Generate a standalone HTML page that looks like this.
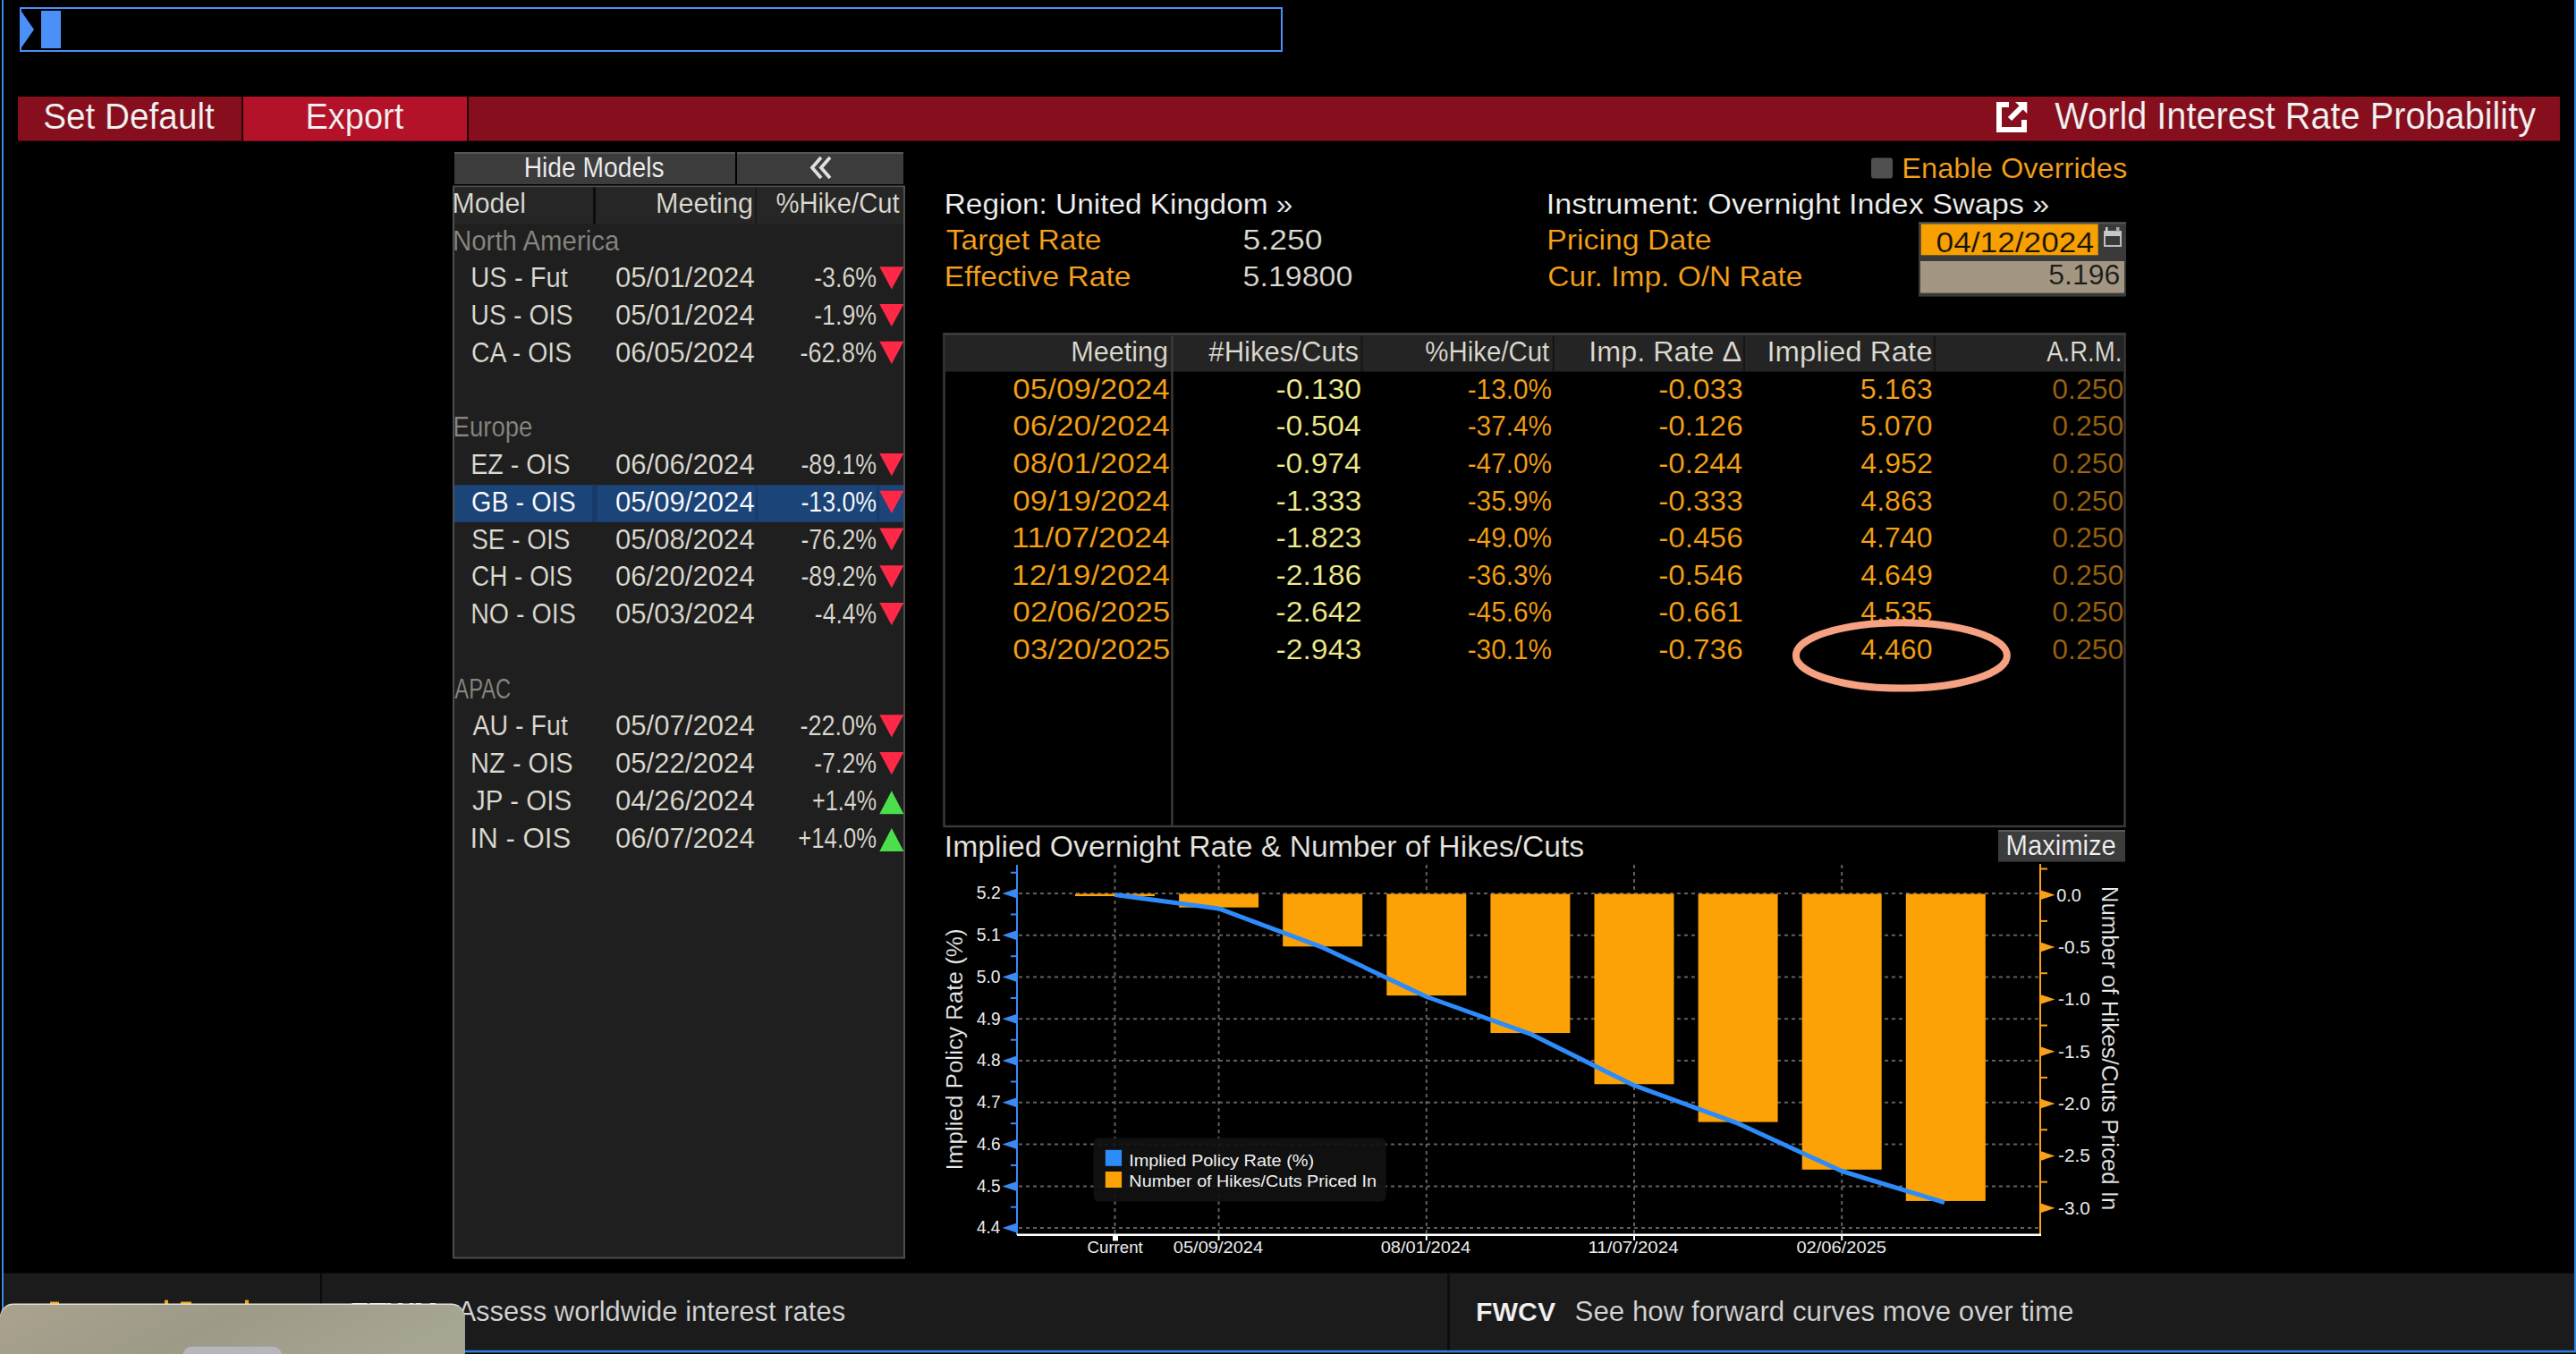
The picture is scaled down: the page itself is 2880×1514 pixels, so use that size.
<!DOCTYPE html>
<html><head><meta charset="utf-8"><style>
html,body{margin:0;padding:0;background:#000;overflow:hidden;width:2880px;height:1514px}
svg{display:block}
text{font-family:"Liberation Sans",sans-serif}
</style></head><body>
<svg width="2880" height="1514" viewBox="0 0 2880 1514">
<rect width="2880" height="1514" fill="#000"/>
<rect x="2.00" y="0.00" width="2.00" height="1512.00" fill="#3a86e6"/>
<rect x="2878.00" y="0.00" width="2.00" height="1512.00" fill="#2f86e0"/>
<rect x="2.00" y="1509.50" width="2878.00" height="3.00" fill="#2f7fd8"/>
<rect x="23" y="9" width="1410" height="48" fill="none" stroke="#4a90f8" stroke-width="2"/>
<polygon points="22,10 38,33 22,56" fill="#4a90f8"/>
<rect x="46.00" y="12.00" width="22.00" height="42.00" fill="#4a90f8"/>
<rect x="20.00" y="108.00" width="2842.00" height="49.50" fill="#870e1d"/>
<rect x="270.00" y="108.00" width="2.00" height="49.50" fill="#1a0003"/>
<rect x="272.00" y="108.00" width="250.00" height="49.50" fill="#b31228"/>
<rect x="522.00" y="108.00" width="2.00" height="49.50" fill="#1a0003"/>
<text x="48.24" y="143.60" font-size="41" fill="#f2f2f2" textLength="191.54" lengthAdjust="spacingAndGlyphs" stroke="#870e1d" stroke-width="0.2">Set Default</text>
<text x="341.38" y="143.60" font-size="41" fill="#f2f2f2" textLength="109.90" lengthAdjust="spacingAndGlyphs" stroke="#b31228" stroke-width="0.2">Export</text>
<path d="M2232,114 H2246 V120 H2238 V142 H2260 V134 H2266 V148 H2232 Z" fill="#fff"/>
<polygon points="2253,114 2266.3,114 2266.3,127" fill="#fff"/>
<line x1="2247" y1="133" x2="2262" y2="118" stroke="#fff" stroke-width="6"/>
<text x="2297.33" y="144.00" font-size="42" fill="#f2f2f2" textLength="537.75" lengthAdjust="spacingAndGlyphs" stroke="#870e1d" stroke-width="0.2">World Interest Rate Probability</text>
<rect x="508.00" y="170.00" width="314.00" height="36.00" fill="#3c3c3c"/>
<rect x="508.00" y="170.00" width="314.00" height="2.00" fill="#555"/>
<rect x="824.00" y="170.00" width="186.00" height="36.00" fill="#3c3c3c"/>
<rect x="824.00" y="170.00" width="186.00" height="2.00" fill="#555"/>
<text x="585.69" y="197.70" font-size="32" fill="#f2f2f2" textLength="156.83" lengthAdjust="spacingAndGlyphs" stroke="#3c3c3c" stroke-width="0.2">Hide Models</text>
<path d="M918,176 L908,187.5 L918,199 M928,176 L918,187.5 L928,199" fill="none" stroke="#e0e0e0" stroke-width="3.8"/>
<rect x="507" y="208.5" width="504" height="1198" fill="#1f1f1f" stroke="#4e4e4e" stroke-width="2"/>
<rect x="508.00" y="209.50" width="502.00" height="41.00" fill="#262626"/>
<rect x="663.00" y="209.50" width="3.00" height="41.00" fill="#0c0c0c"/>
<rect x="844.00" y="209.50" width="2.00" height="41.00" fill="#1a1a1a"/>
<text x="505.51" y="237.60" font-size="32" fill="#dedbd2" textLength="82.51" lengthAdjust="spacingAndGlyphs" stroke="#262626" stroke-width="0.2">Model</text>
<text x="732.99" y="237.60" font-size="32" fill="#dedbd2" textLength="108.99" lengthAdjust="spacingAndGlyphs" stroke="#262626" stroke-width="0.2">Meeting</text>
<text x="867.46" y="237.60" font-size="32" fill="#dedbd2" textLength="138.26" lengthAdjust="spacingAndGlyphs" stroke="#262626" stroke-width="0.2">%Hike/Cut</text>
<text x="506.01" y="279.50" font-size="32" fill="#8a8780" textLength="186.29" lengthAdjust="spacingAndGlyphs" stroke="#1f1f1f" stroke-width="0.2">North America</text>
<text x="526.25" y="321.25" font-size="32" fill="#dedbd2" textLength="108.67" lengthAdjust="spacingAndGlyphs" stroke="#1f1f1f" stroke-width="0.2">US - Fut</text>
<text x="687.98" y="321.25" font-size="32" fill="#dedbd2" textLength="155.73" lengthAdjust="spacingAndGlyphs" stroke="#1f1f1f" stroke-width="0.2">05/01/2024</text>
<text x="910.21" y="321.25" font-size="32" fill="#dedbd2" textLength="69.94" lengthAdjust="spacingAndGlyphs" stroke="#1f1f1f" stroke-width="0.2">-3.6%</text>
<polygon points="983.3,298.2 1010.4,298.2 996.85,323.6" fill="#ff2847"/>
<text x="526.30" y="363.00" font-size="32" fill="#dedbd2" textLength="114.32" lengthAdjust="spacingAndGlyphs" stroke="#1f1f1f" stroke-width="0.2">US - OIS</text>
<text x="687.98" y="363.00" font-size="32" fill="#dedbd2" textLength="155.73" lengthAdjust="spacingAndGlyphs" stroke="#1f1f1f" stroke-width="0.2">05/01/2024</text>
<text x="910.21" y="363.00" font-size="32" fill="#dedbd2" textLength="69.94" lengthAdjust="spacingAndGlyphs" stroke="#1f1f1f" stroke-width="0.2">-1.9%</text>
<polygon points="983.3,340.0 1010.4,340.0 996.85,365.3" fill="#ff2847"/>
<text x="527.08" y="404.75" font-size="32" fill="#dedbd2" textLength="112.01" lengthAdjust="spacingAndGlyphs" stroke="#1f1f1f" stroke-width="0.2">CA - OIS</text>
<text x="687.98" y="404.75" font-size="32" fill="#dedbd2" textLength="155.73" lengthAdjust="spacingAndGlyphs" stroke="#1f1f1f" stroke-width="0.2">06/05/2024</text>
<text x="894.40" y="404.75" font-size="32" fill="#dedbd2" textLength="85.77" lengthAdjust="spacingAndGlyphs" stroke="#1f1f1f" stroke-width="0.2">-62.8%</text>
<polygon points="983.3,381.8 1010.4,381.8 996.85,407.1" fill="#ff2847"/>
<text x="506.54" y="488.25" font-size="32" fill="#8a8780" textLength="88.78" lengthAdjust="spacingAndGlyphs" stroke="#1f1f1f" stroke-width="0.2">Europe</text>
<text x="526.15" y="530.00" font-size="32" fill="#dedbd2" textLength="111.36" lengthAdjust="spacingAndGlyphs" stroke="#1f1f1f" stroke-width="0.2">EZ - OIS</text>
<text x="687.98" y="530.00" font-size="32" fill="#dedbd2" textLength="155.73" lengthAdjust="spacingAndGlyphs" stroke="#1f1f1f" stroke-width="0.2">06/06/2024</text>
<text x="895.41" y="530.00" font-size="32" fill="#dedbd2" textLength="84.74" lengthAdjust="spacingAndGlyphs" stroke="#1f1f1f" stroke-width="0.2">-89.1%</text>
<polygon points="983.3,507.0 1010.4,507.0 996.85,532.3" fill="#ff2847"/>
<rect x="508.00" y="542.25" width="502.00" height="41.50" fill="#1b4478"/>
<rect x="662.00" y="542.25" width="6.00" height="41.50" fill="#183a68"/>
<rect x="845.00" y="542.25" width="2.00" height="41.50" fill="#183a68"/>
<rect x="980.00" y="542.25" width="3.00" height="41.50" fill="#183a68"/>
<text x="527.05" y="571.75" font-size="32" fill="#ffffff" textLength="116.67" lengthAdjust="spacingAndGlyphs" stroke="#1b4478" stroke-width="0.2">GB - OIS</text>
<text x="687.98" y="571.75" font-size="32" fill="#ffffff" textLength="155.73" lengthAdjust="spacingAndGlyphs" stroke="#1b4478" stroke-width="0.2">05/09/2024</text>
<text x="895.41" y="571.75" font-size="32" fill="#ffffff" textLength="84.74" lengthAdjust="spacingAndGlyphs" stroke="#1b4478" stroke-width="0.2">-13.0%</text>
<polygon points="983.3,548.8 1010.4,548.8 996.85,574.0" fill="#ff2847"/>
<text x="527.23" y="613.50" font-size="32" fill="#dedbd2" textLength="110.25" lengthAdjust="spacingAndGlyphs" stroke="#1f1f1f" stroke-width="0.2">SE - OIS</text>
<text x="687.98" y="613.50" font-size="32" fill="#dedbd2" textLength="155.73" lengthAdjust="spacingAndGlyphs" stroke="#1f1f1f" stroke-width="0.2">05/08/2024</text>
<text x="895.41" y="613.50" font-size="32" fill="#dedbd2" textLength="84.74" lengthAdjust="spacingAndGlyphs" stroke="#1f1f1f" stroke-width="0.2">-76.2%</text>
<polygon points="983.3,590.5 1010.4,590.5 996.85,615.8" fill="#ff2847"/>
<text x="527.08" y="655.25" font-size="32" fill="#dedbd2" textLength="113.10" lengthAdjust="spacingAndGlyphs" stroke="#1f1f1f" stroke-width="0.2">CH - OIS</text>
<text x="687.98" y="655.25" font-size="32" fill="#dedbd2" textLength="155.73" lengthAdjust="spacingAndGlyphs" stroke="#1f1f1f" stroke-width="0.2">06/20/2024</text>
<text x="895.41" y="655.25" font-size="32" fill="#dedbd2" textLength="84.74" lengthAdjust="spacingAndGlyphs" stroke="#1f1f1f" stroke-width="0.2">-89.2%</text>
<polygon points="983.3,632.2 1010.4,632.2 996.85,657.5" fill="#ff2847"/>
<text x="526.15" y="697.00" font-size="32" fill="#dedbd2" textLength="117.56" lengthAdjust="spacingAndGlyphs" stroke="#1f1f1f" stroke-width="0.2">NO - OIS</text>
<text x="687.98" y="697.00" font-size="32" fill="#dedbd2" textLength="155.73" lengthAdjust="spacingAndGlyphs" stroke="#1f1f1f" stroke-width="0.2">05/03/2024</text>
<text x="910.82" y="697.00" font-size="32" fill="#dedbd2" textLength="69.33" lengthAdjust="spacingAndGlyphs" stroke="#1f1f1f" stroke-width="0.2">-4.4%</text>
<polygon points="983.3,674.0 1010.4,674.0 996.85,699.3" fill="#ff2847"/>
<text x="508.35" y="780.50" font-size="32" fill="#8a8780" textLength="62.82" lengthAdjust="spacingAndGlyphs" stroke="#1f1f1f" stroke-width="0.2">APAC</text>
<text x="528.44" y="822.25" font-size="32" fill="#dedbd2" textLength="106.47" lengthAdjust="spacingAndGlyphs" stroke="#1f1f1f" stroke-width="0.2">AU - Fut</text>
<text x="687.98" y="822.25" font-size="32" fill="#dedbd2" textLength="155.73" lengthAdjust="spacingAndGlyphs" stroke="#1f1f1f" stroke-width="0.2">05/07/2024</text>
<text x="894.40" y="822.25" font-size="32" fill="#dedbd2" textLength="85.77" lengthAdjust="spacingAndGlyphs" stroke="#1f1f1f" stroke-width="0.2">-22.0%</text>
<polygon points="983.3,799.2 1010.4,799.2 996.85,824.5" fill="#ff2847"/>
<text x="526.12" y="864.00" font-size="32" fill="#dedbd2" textLength="114.51" lengthAdjust="spacingAndGlyphs" stroke="#1f1f1f" stroke-width="0.2">NZ - OIS</text>
<text x="687.98" y="864.00" font-size="32" fill="#dedbd2" textLength="155.73" lengthAdjust="spacingAndGlyphs" stroke="#1f1f1f" stroke-width="0.2">05/22/2024</text>
<text x="910.21" y="864.00" font-size="32" fill="#dedbd2" textLength="69.94" lengthAdjust="spacingAndGlyphs" stroke="#1f1f1f" stroke-width="0.2">-7.2%</text>
<polygon points="983.3,841.0 1010.4,841.0 996.85,866.3" fill="#ff2847"/>
<text x="528.04" y="905.75" font-size="32" fill="#dedbd2" textLength="111.11" lengthAdjust="spacingAndGlyphs" stroke="#1f1f1f" stroke-width="0.2">JP - OIS</text>
<text x="687.98" y="905.75" font-size="32" fill="#dedbd2" textLength="155.73" lengthAdjust="spacingAndGlyphs" stroke="#1f1f1f" stroke-width="0.2">04/26/2024</text>
<text x="908.07" y="905.75" font-size="32" fill="#dedbd2" textLength="72.02" lengthAdjust="spacingAndGlyphs" stroke="#1f1f1f" stroke-width="0.2">+1.4%</text>
<polygon points="983.3,910.2 1010.4,910.2 996.85,884.2" fill="#4be04b"/>
<text x="525.62" y="947.50" font-size="32" fill="#dedbd2" textLength="112.61" lengthAdjust="spacingAndGlyphs" stroke="#1f1f1f" stroke-width="0.2">IN - OIS</text>
<text x="687.98" y="947.50" font-size="32" fill="#dedbd2" textLength="155.73" lengthAdjust="spacingAndGlyphs" stroke="#1f1f1f" stroke-width="0.2">06/07/2024</text>
<text x="892.35" y="947.50" font-size="32" fill="#dedbd2" textLength="87.77" lengthAdjust="spacingAndGlyphs" stroke="#1f1f1f" stroke-width="0.2">+14.0%</text>
<polygon points="983.3,952.0 1010.4,952.0 996.85,926.0" fill="#4be04b"/>
<rect x="2092" y="176.5" width="24" height="23" rx="3" fill="#505050"/>
<text x="2126.33" y="199.00" font-size="32" fill="#f7a21b" textLength="251.85" lengthAdjust="spacingAndGlyphs" stroke="#000" stroke-width="0.2">Enable Overrides</text>
<text x="1055.76" y="238.70" font-size="32" fill="#f2f2f2" textLength="389.59" lengthAdjust="spacingAndGlyphs" stroke="#000" stroke-width="0.2">Region: United Kingdom »</text>
<text x="1728.84" y="238.70" font-size="32" fill="#f2f2f2" textLength="562.54" lengthAdjust="spacingAndGlyphs" stroke="#000" stroke-width="0.2">Instrument: Overnight Index Swaps »</text>
<text x="1057.76" y="279.30" font-size="32" fill="#f7a21b" textLength="173.70" lengthAdjust="spacingAndGlyphs" stroke="#000" stroke-width="0.2">Target Rate</text>
<text x="1389.58" y="279.30" font-size="32" fill="#dedbd2" textLength="88.81" lengthAdjust="spacingAndGlyphs" stroke="#000" stroke-width="0.2">5.250</text>
<text x="1055.75" y="320.20" font-size="32" fill="#f7a21b" textLength="208.74" lengthAdjust="spacingAndGlyphs" stroke="#000" stroke-width="0.2">Effective Rate</text>
<text x="1389.64" y="320.20" font-size="32" fill="#dedbd2" textLength="122.68" lengthAdjust="spacingAndGlyphs" stroke="#000" stroke-width="0.2">5.19800</text>
<text x="1729.22" y="279.30" font-size="32" fill="#f7a21b" textLength="184.28" lengthAdjust="spacingAndGlyphs" stroke="#000" stroke-width="0.2">Pricing Date</text>
<text x="1730.31" y="320.20" font-size="32" fill="#f7a21b" textLength="285.17" lengthAdjust="spacingAndGlyphs" stroke="#000" stroke-width="0.2">Cur. Imp. O/N Rate</text>
<rect x="2145.00" y="248.40" width="232.00" height="83.20" fill="#3a3a3a"/>
<rect x="2147.70" y="250.30" width="198.00" height="35.00" fill="#f7a000"/>
<text x="2164.62" y="282.00" font-size="32" fill="#111" textLength="176.41" lengthAdjust="spacingAndGlyphs" stroke="#f7a000" stroke-width="0.2">04/12/2024</text>
<rect x="2145.00" y="248.40" width="232.00" height="2.00" fill="#555"/>
<rect x="2353" y="259" width="18" height="16" fill="none" stroke="#bdbdbd" stroke-width="2"/>
<rect x="2353.00" y="259.00" width="18.00" height="5.00" fill="#c8c8c8"/>
<rect x="2354.00" y="254.00" width="2.50" height="5.00" fill="#d0d0d0"/>
<rect x="2366.00" y="254.00" width="3.50" height="5.00" fill="#a8a8a8"/>
<rect x="2147.00" y="292.00" width="228.00" height="35.60" fill="#a39682"/>
<text x="2290.22" y="318.40" font-size="32" fill="#1a1a1a" textLength="80.19" lengthAdjust="spacingAndGlyphs" stroke="#a39682" stroke-width="0.2">5.196</text>
<rect x="1055.5" y="373.5" width="1320" height="550.5" fill="#000" stroke="#3a3a3a" stroke-width="2.5"/>
<rect x="1054.50" y="372.00" width="1322.00" height="3.50" fill="#3a3a3a"/>
<rect x="1056.50" y="375.50" width="1318.00" height="40.00" fill="#242424"/>
<rect x="1521.60" y="375.50" width="2.00" height="40.00" fill="#141414"/>
<rect x="1735.70" y="375.50" width="2.00" height="40.00" fill="#141414"/>
<rect x="1949.00" y="375.50" width="2.00" height="40.00" fill="#141414"/>
<rect x="2161.80" y="375.50" width="2.00" height="40.00" fill="#141414"/>
<rect x="1309.20" y="375.50" width="2.50" height="548.00" fill="#3a3a3a"/>
<text x="1197.19" y="403.60" font-size="32" fill="#dedbd2" textLength="108.78" lengthAdjust="spacingAndGlyphs" stroke="#252525" stroke-width="0.2">Meeting</text>
<text x="1351.36" y="403.60" font-size="32" fill="#dedbd2" textLength="167.56" lengthAdjust="spacingAndGlyphs" stroke="#252525" stroke-width="0.2">#Hikes/Cuts</text>
<text x="1593.35" y="403.60" font-size="32" fill="#dedbd2" textLength="138.86" lengthAdjust="spacingAndGlyphs" stroke="#252525" stroke-width="0.2">%Hike/Cut</text>
<text x="1776.32" y="403.60" font-size="32" fill="#dedbd2" textLength="170.66" lengthAdjust="spacingAndGlyphs" stroke="#252525" stroke-width="0.2">Imp. Rate Δ</text>
<text x="1975.46" y="403.60" font-size="32" fill="#dedbd2" textLength="185.01" lengthAdjust="spacingAndGlyphs" stroke="#252525" stroke-width="0.2">Implied Rate</text>
<text x="2288.25" y="403.60" font-size="32" fill="#dedbd2" textLength="84.07" lengthAdjust="spacingAndGlyphs" stroke="#252525" stroke-width="0.2">A.R.M.</text>
<text x="1132.33" y="445.80" font-size="32" fill="#f8a214" textLength="175.50" lengthAdjust="spacingAndGlyphs" stroke="#000" stroke-width="0.2">05/09/2024</text>
<text x="1426.40" y="445.80" font-size="32" fill="#f2ec8c" textLength="95.72" lengthAdjust="spacingAndGlyphs" stroke="#000" stroke-width="0.2">-0.130</text>
<text x="1640.68" y="445.80" font-size="32" fill="#f8a214" textLength="94.39" lengthAdjust="spacingAndGlyphs" stroke="#000" stroke-width="0.2">-13.0%</text>
<text x="1854.22" y="445.80" font-size="32" fill="#f8a214" textLength="94.44" lengthAdjust="spacingAndGlyphs" stroke="#000" stroke-width="0.2">-0.033</text>
<text x="2079.70" y="445.80" font-size="32" fill="#f8a214" textLength="81.02" lengthAdjust="spacingAndGlyphs" stroke="#000" stroke-width="0.2">5.163</text>
<text x="2294.25" y="445.80" font-size="32" fill="#9c6410" textLength="80.00" lengthAdjust="spacingAndGlyphs" stroke="#000" stroke-width="0.2">0.250</text>
<text x="1132.33" y="487.40" font-size="32" fill="#f8a214" textLength="175.50" lengthAdjust="spacingAndGlyphs" stroke="#000" stroke-width="0.2">06/20/2024</text>
<text x="1426.41" y="487.40" font-size="32" fill="#f2ec8c" textLength="95.38" lengthAdjust="spacingAndGlyphs" stroke="#000" stroke-width="0.2">-0.504</text>
<text x="1640.68" y="487.40" font-size="32" fill="#f8a214" textLength="94.39" lengthAdjust="spacingAndGlyphs" stroke="#000" stroke-width="0.2">-37.4%</text>
<text x="1854.22" y="487.40" font-size="32" fill="#f8a214" textLength="94.44" lengthAdjust="spacingAndGlyphs" stroke="#000" stroke-width="0.2">-0.126</text>
<text x="2079.71" y="487.40" font-size="32" fill="#f8a214" textLength="80.86" lengthAdjust="spacingAndGlyphs" stroke="#000" stroke-width="0.2">5.070</text>
<text x="2294.25" y="487.40" font-size="32" fill="#9c6410" textLength="80.00" lengthAdjust="spacingAndGlyphs" stroke="#000" stroke-width="0.2">0.250</text>
<text x="1132.33" y="529.00" font-size="32" fill="#f8a214" textLength="175.50" lengthAdjust="spacingAndGlyphs" stroke="#000" stroke-width="0.2">08/01/2024</text>
<text x="1426.41" y="529.00" font-size="32" fill="#f2ec8c" textLength="95.38" lengthAdjust="spacingAndGlyphs" stroke="#000" stroke-width="0.2">-0.974</text>
<text x="1640.68" y="529.00" font-size="32" fill="#f8a214" textLength="94.39" lengthAdjust="spacingAndGlyphs" stroke="#000" stroke-width="0.2">-47.0%</text>
<text x="1854.23" y="529.00" font-size="32" fill="#f8a214" textLength="93.94" lengthAdjust="spacingAndGlyphs" stroke="#000" stroke-width="0.2">-0.244</text>
<text x="2080.26" y="529.00" font-size="32" fill="#f8a214" textLength="80.66" lengthAdjust="spacingAndGlyphs" stroke="#000" stroke-width="0.2">4.952</text>
<text x="2294.25" y="529.00" font-size="32" fill="#9c6410" textLength="80.00" lengthAdjust="spacingAndGlyphs" stroke="#000" stroke-width="0.2">0.250</text>
<text x="1132.33" y="570.60" font-size="32" fill="#f8a214" textLength="175.50" lengthAdjust="spacingAndGlyphs" stroke="#000" stroke-width="0.2">09/19/2024</text>
<text x="1426.40" y="570.60" font-size="32" fill="#f2ec8c" textLength="95.89" lengthAdjust="spacingAndGlyphs" stroke="#000" stroke-width="0.2">-1.333</text>
<text x="1640.68" y="570.60" font-size="32" fill="#f8a214" textLength="94.39" lengthAdjust="spacingAndGlyphs" stroke="#000" stroke-width="0.2">-35.9%</text>
<text x="1854.22" y="570.60" font-size="32" fill="#f8a214" textLength="94.44" lengthAdjust="spacingAndGlyphs" stroke="#000" stroke-width="0.2">-0.333</text>
<text x="2080.26" y="570.60" font-size="32" fill="#f8a214" textLength="80.45" lengthAdjust="spacingAndGlyphs" stroke="#000" stroke-width="0.2">4.863</text>
<text x="2294.25" y="570.60" font-size="32" fill="#9c6410" textLength="80.00" lengthAdjust="spacingAndGlyphs" stroke="#000" stroke-width="0.2">0.250</text>
<text x="1131.01" y="612.20" font-size="32" fill="#f8a214" textLength="176.83" lengthAdjust="spacingAndGlyphs" stroke="#000" stroke-width="0.2">11/07/2024</text>
<text x="1426.40" y="612.20" font-size="32" fill="#f2ec8c" textLength="95.89" lengthAdjust="spacingAndGlyphs" stroke="#000" stroke-width="0.2">-1.823</text>
<text x="1640.68" y="612.20" font-size="32" fill="#f8a214" textLength="94.39" lengthAdjust="spacingAndGlyphs" stroke="#000" stroke-width="0.2">-49.0%</text>
<text x="1854.22" y="612.20" font-size="32" fill="#f8a214" textLength="94.44" lengthAdjust="spacingAndGlyphs" stroke="#000" stroke-width="0.2">-0.456</text>
<text x="2080.26" y="612.20" font-size="32" fill="#f8a214" textLength="80.29" lengthAdjust="spacingAndGlyphs" stroke="#000" stroke-width="0.2">4.740</text>
<text x="2294.25" y="612.20" font-size="32" fill="#9c6410" textLength="80.00" lengthAdjust="spacingAndGlyphs" stroke="#000" stroke-width="0.2">0.250</text>
<text x="1131.01" y="653.80" font-size="32" fill="#f8a214" textLength="176.83" lengthAdjust="spacingAndGlyphs" stroke="#000" stroke-width="0.2">12/19/2024</text>
<text x="1426.40" y="653.80" font-size="32" fill="#f2ec8c" textLength="95.89" lengthAdjust="spacingAndGlyphs" stroke="#000" stroke-width="0.2">-2.186</text>
<text x="1640.68" y="653.80" font-size="32" fill="#f8a214" textLength="94.39" lengthAdjust="spacingAndGlyphs" stroke="#000" stroke-width="0.2">-36.3%</text>
<text x="1854.22" y="653.80" font-size="32" fill="#f8a214" textLength="94.44" lengthAdjust="spacingAndGlyphs" stroke="#000" stroke-width="0.2">-0.546</text>
<text x="2080.26" y="653.80" font-size="32" fill="#f8a214" textLength="80.56" lengthAdjust="spacingAndGlyphs" stroke="#000" stroke-width="0.2">4.649</text>
<text x="2294.25" y="653.80" font-size="32" fill="#9c6410" textLength="80.00" lengthAdjust="spacingAndGlyphs" stroke="#000" stroke-width="0.2">0.250</text>
<text x="1132.33" y="695.40" font-size="32" fill="#f8a214" textLength="175.95" lengthAdjust="spacingAndGlyphs" stroke="#000" stroke-width="0.2">02/06/2025</text>
<text x="1426.39" y="695.40" font-size="32" fill="#f2ec8c" textLength="96.11" lengthAdjust="spacingAndGlyphs" stroke="#000" stroke-width="0.2">-2.642</text>
<text x="1640.68" y="695.40" font-size="32" fill="#f8a214" textLength="94.39" lengthAdjust="spacingAndGlyphs" stroke="#000" stroke-width="0.2">-45.6%</text>
<text x="1854.22" y="695.40" font-size="32" fill="#f8a214" textLength="94.61" lengthAdjust="spacingAndGlyphs" stroke="#000" stroke-width="0.2">-0.661</text>
<text x="2080.26" y="695.40" font-size="32" fill="#f8a214" textLength="80.39" lengthAdjust="spacingAndGlyphs" stroke="#000" stroke-width="0.2">4.535</text>
<text x="2294.25" y="695.40" font-size="32" fill="#9c6410" textLength="80.00" lengthAdjust="spacingAndGlyphs" stroke="#000" stroke-width="0.2">0.250</text>
<text x="1132.33" y="737.00" font-size="32" fill="#f8a214" textLength="175.95" lengthAdjust="spacingAndGlyphs" stroke="#000" stroke-width="0.2">03/20/2025</text>
<text x="1426.40" y="737.00" font-size="32" fill="#f2ec8c" textLength="95.89" lengthAdjust="spacingAndGlyphs" stroke="#000" stroke-width="0.2">-2.943</text>
<text x="1640.68" y="737.00" font-size="32" fill="#f8a214" textLength="94.39" lengthAdjust="spacingAndGlyphs" stroke="#000" stroke-width="0.2">-30.1%</text>
<text x="1854.22" y="737.00" font-size="32" fill="#f8a214" textLength="94.44" lengthAdjust="spacingAndGlyphs" stroke="#000" stroke-width="0.2">-0.736</text>
<text x="2080.26" y="737.00" font-size="32" fill="#f8a214" textLength="80.29" lengthAdjust="spacingAndGlyphs" stroke="#000" stroke-width="0.2">4.460</text>
<text x="2294.25" y="737.00" font-size="32" fill="#9c6410" textLength="80.00" lengthAdjust="spacingAndGlyphs" stroke="#000" stroke-width="0.2">0.250</text>
<ellipse cx="2125.9" cy="732.9" rx="118" ry="36.7" fill="none" stroke="#f5a182" stroke-width="8"/>
<text x="1055.89" y="957.60" font-size="33" fill="#e8e6e0" textLength="715.33" lengthAdjust="spacingAndGlyphs" stroke="#000" stroke-width="0.2">Implied Overnight Rate &amp; Number of Hikes/Cuts</text>
<rect x="2234.00" y="928.00" width="142.00" height="35.60" fill="#3c3c3c"/>
<rect x="2234.00" y="928.00" width="142.00" height="2.00" fill="#5a5a5a"/>
<text x="2242.61" y="955.80" font-size="32" fill="#f2f2f2" textLength="123.19" lengthAdjust="spacingAndGlyphs" stroke="#3c3c3c" stroke-width="0.2">Maximize</text>
<line x1="1139" y1="999.1" x2="2280" y2="999.1" stroke="#606060" stroke-width="2" stroke-dasharray="4 4"/>
<line x1="1139" y1="1045.8" x2="2280" y2="1045.8" stroke="#606060" stroke-width="2" stroke-dasharray="4 4"/>
<line x1="1139" y1="1092.6" x2="2280" y2="1092.6" stroke="#606060" stroke-width="2" stroke-dasharray="4 4"/>
<line x1="1139" y1="1139.3" x2="2280" y2="1139.3" stroke="#606060" stroke-width="2" stroke-dasharray="4 4"/>
<line x1="1139" y1="1186.1" x2="2280" y2="1186.1" stroke="#606060" stroke-width="2" stroke-dasharray="4 4"/>
<line x1="1139" y1="1232.8" x2="2280" y2="1232.8" stroke="#606060" stroke-width="2" stroke-dasharray="4 4"/>
<line x1="1139" y1="1279.6" x2="2280" y2="1279.6" stroke="#606060" stroke-width="2" stroke-dasharray="4 4"/>
<line x1="1139" y1="1326.4" x2="2280" y2="1326.4" stroke="#606060" stroke-width="2" stroke-dasharray="4 4"/>
<line x1="1139" y1="1373.1" x2="2280" y2="1373.1" stroke="#606060" stroke-width="2" stroke-dasharray="4 4"/>
<line x1="1246.5" y1="967" x2="1246.5" y2="1379" stroke="#606060" stroke-width="2" stroke-dasharray="4 4"/>
<line x1="1362.6" y1="967" x2="1362.6" y2="1379" stroke="#606060" stroke-width="2" stroke-dasharray="4 4"/>
<line x1="1594.8" y1="967" x2="1594.8" y2="1379" stroke="#606060" stroke-width="2" stroke-dasharray="4 4"/>
<line x1="1827.0" y1="967" x2="1827.0" y2="1379" stroke="#606060" stroke-width="2" stroke-dasharray="4 4"/>
<line x1="2059.2" y1="967" x2="2059.2" y2="1379" stroke="#606060" stroke-width="2" stroke-dasharray="4 4"/>
<rect x="1202.00" y="999.50" width="89.00" height="2.50" fill="#fca206"/>
<rect x="1318.10" y="999.50" width="89.00" height="15.17" fill="#fca206"/>
<rect x="1434.20" y="999.50" width="89.00" height="58.82" fill="#fca206"/>
<rect x="1550.30" y="999.50" width="89.00" height="113.67" fill="#fca206"/>
<rect x="1666.40" y="999.50" width="89.00" height="155.56" fill="#fca206"/>
<rect x="1782.50" y="999.50" width="89.00" height="212.74" fill="#fca206"/>
<rect x="1898.60" y="999.50" width="89.00" height="255.11" fill="#fca206"/>
<rect x="2014.70" y="999.50" width="89.00" height="308.32" fill="#fca206"/>
<rect x="2130.80" y="999.50" width="89.00" height="343.45" fill="#fca206"/>
<path d="M1246.5,1000.5 L1362.6,1015.9 L1478.7,1059.4 L1594.8,1114.5 L1710.9,1156.1 L1827.0,1213.7 L1943.1,1256.2 L2059.2,1309.5 L2174.0,1344.6" fill="none" stroke="#2e8bfa" stroke-width="5" stroke-linejoin="round"/>
<rect x="1136.00" y="967.00" width="2.00" height="414.00" fill="#3a8af5"/>
<rect x="2280.00" y="966.00" width="2.00" height="415.00" fill="#f9a11a"/>
<rect x="1137.00" y="1379.50" width="1145.00" height="2.50" fill="#ffffff"/>
<polygon points="1137,993.6 1120.5,999.1 1137,1004.6" fill="#3a8af5"/>
<text x="1091.72" y="1005.30" font-size="19.5" fill="#ececec" textLength="27.06" lengthAdjust="spacingAndGlyphs">5.2</text>
<polygon points="1137,1040.3 1120.5,1045.8 1137,1051.3" fill="#3a8af5"/>
<text x="1091.72" y="1052.05" font-size="19.5" fill="#ececec" textLength="27.03" lengthAdjust="spacingAndGlyphs">5.1</text>
<polygon points="1137,1087.1 1120.5,1092.6 1137,1098.1" fill="#3a8af5"/>
<text x="1091.73" y="1098.80" font-size="19.5" fill="#ececec" textLength="26.83" lengthAdjust="spacingAndGlyphs">5.0</text>
<polygon points="1137,1133.8 1120.5,1139.3 1137,1144.8" fill="#3a8af5"/>
<text x="1092.06" y="1145.55" font-size="19.5" fill="#ececec" textLength="26.65" lengthAdjust="spacingAndGlyphs">4.9</text>
<polygon points="1137,1180.6 1120.5,1186.1 1137,1191.6" fill="#3a8af5"/>
<text x="1092.06" y="1192.30" font-size="19.5" fill="#ececec" textLength="26.57" lengthAdjust="spacingAndGlyphs">4.8</text>
<polygon points="1137,1227.3 1120.5,1232.8 1137,1238.3" fill="#3a8af5"/>
<text x="1092.06" y="1239.05" font-size="19.5" fill="#ececec" textLength="26.71" lengthAdjust="spacingAndGlyphs">4.7</text>
<polygon points="1137,1274.1 1120.5,1279.6 1137,1285.1" fill="#3a8af5"/>
<text x="1092.06" y="1285.80" font-size="19.5" fill="#ececec" textLength="26.58" lengthAdjust="spacingAndGlyphs">4.6</text>
<polygon points="1137,1320.9 1120.5,1326.4 1137,1331.9" fill="#3a8af5"/>
<text x="1092.06" y="1332.55" font-size="19.5" fill="#ececec" textLength="26.54" lengthAdjust="spacingAndGlyphs">4.5</text>
<polygon points="1137,1367.6 1120.5,1373.1 1137,1378.6" fill="#3a8af5"/>
<text x="1092.07" y="1379.30" font-size="19.5" fill="#ececec" textLength="26.29" lengthAdjust="spacingAndGlyphs">4.4</text>
<rect x="1130.00" y="974.73" width="7.00" height="2.00" fill="#3a8af5"/>
<rect x="1130.00" y="1021.47" width="7.00" height="2.00" fill="#3a8af5"/>
<rect x="1130.00" y="1068.22" width="7.00" height="2.00" fill="#3a8af5"/>
<rect x="1130.00" y="1114.97" width="7.00" height="2.00" fill="#3a8af5"/>
<rect x="1130.00" y="1161.72" width="7.00" height="2.00" fill="#3a8af5"/>
<rect x="1130.00" y="1208.48" width="7.00" height="2.00" fill="#3a8af5"/>
<rect x="1130.00" y="1255.22" width="7.00" height="2.00" fill="#3a8af5"/>
<rect x="1130.00" y="1301.97" width="7.00" height="2.00" fill="#3a8af5"/>
<rect x="1130.00" y="1348.72" width="7.00" height="2.00" fill="#3a8af5"/>
<polygon points="2281,995.2 2297.5,1000.7 2281,1006.2" fill="#f9a11a"/>
<text x="2299.23" y="1007.50" font-size="20" fill="#ececec" textLength="27.55" lengthAdjust="spacingAndGlyphs">0.0</text>
<polygon points="2281,1053.5 2297.5,1059.0 2281,1064.5" fill="#f9a11a"/>
<text x="2301.08" y="1065.85" font-size="20" fill="#ececec" textLength="35.80" lengthAdjust="spacingAndGlyphs">-0.5</text>
<polygon points="2281,1111.9 2297.5,1117.4 2281,1122.9" fill="#f9a11a"/>
<text x="2301.08" y="1124.20" font-size="20" fill="#ececec" textLength="35.73" lengthAdjust="spacingAndGlyphs">-1.0</text>
<polygon points="2281,1170.2 2297.5,1175.8 2281,1181.2" fill="#f9a11a"/>
<text x="2301.08" y="1182.55" font-size="20" fill="#ececec" textLength="35.80" lengthAdjust="spacingAndGlyphs">-1.5</text>
<polygon points="2281,1228.6 2297.5,1234.1 2281,1239.6" fill="#f9a11a"/>
<text x="2301.08" y="1240.90" font-size="20" fill="#ececec" textLength="35.73" lengthAdjust="spacingAndGlyphs">-2.0</text>
<polygon points="2281,1287.0 2297.5,1292.5 2281,1298.0" fill="#f9a11a"/>
<text x="2301.08" y="1299.25" font-size="20" fill="#ececec" textLength="35.80" lengthAdjust="spacingAndGlyphs">-2.5</text>
<polygon points="2281,1345.3 2297.5,1350.8 2281,1356.3" fill="#f9a11a"/>
<text x="2301.08" y="1357.60" font-size="20" fill="#ececec" textLength="35.73" lengthAdjust="spacingAndGlyphs">-3.0</text>
<rect x="2281.00" y="970.53" width="8.00" height="2.00" fill="#f9a11a"/>
<rect x="2281.00" y="1028.88" width="8.00" height="2.00" fill="#f9a11a"/>
<rect x="2281.00" y="1087.23" width="8.00" height="2.00" fill="#f9a11a"/>
<rect x="2281.00" y="1145.58" width="8.00" height="2.00" fill="#f9a11a"/>
<rect x="2281.00" y="1203.92" width="8.00" height="2.00" fill="#f9a11a"/>
<rect x="2281.00" y="1262.28" width="8.00" height="2.00" fill="#f9a11a"/>
<rect x="2281.00" y="1320.62" width="8.00" height="2.00" fill="#f9a11a"/>
<rect x="1244.00" y="1381.00" width="6.00" height="6.50" fill="#fff"/>
<rect x="1361.60" y="1381.00" width="2.00" height="6.00" fill="#fff"/>
<rect x="1593.80" y="1381.00" width="2.00" height="6.00" fill="#fff"/>
<rect x="1826.00" y="1381.00" width="2.00" height="6.00" fill="#fff"/>
<rect x="2058.20" y="1381.00" width="2.00" height="6.00" fill="#fff"/>
<text x="1215.55" y="1401.30" font-size="19" fill="#ececec" textLength="62.18" lengthAdjust="spacingAndGlyphs">Current</text>
<text x="1311.82" y="1401.30" font-size="19" fill="#ececec" textLength="100.37" lengthAdjust="spacingAndGlyphs">05/09/2024</text>
<text x="1543.72" y="1401.30" font-size="19" fill="#ececec" textLength="100.37" lengthAdjust="spacingAndGlyphs">08/01/2024</text>
<text x="1775.46" y="1401.30" font-size="19" fill="#ececec" textLength="101.13" lengthAdjust="spacingAndGlyphs">11/07/2024</text>
<text x="2008.41" y="1401.30" font-size="19" fill="#ececec" textLength="100.63" lengthAdjust="spacingAndGlyphs">02/06/2025</text>
<g transform="translate(1075.5,1306) rotate(-90)">
<text x="-2.40" y="0.00" font-size="26" fill="#ececec" textLength="270.01" lengthAdjust="spacingAndGlyphs" stroke="#000" stroke-width="0.2">Implied Policy Rate (%)</text>
</g>
<g transform="translate(2349.5,992.8) rotate(90)">
<text x="-2.13" y="0.00" font-size="26" fill="#ececec" textLength="362.81" lengthAdjust="spacingAndGlyphs" stroke="#000" stroke-width="0.2">Number of Hikes/Cuts Priced In</text>
</g>
<rect x="1222.4" y="1272.4" width="327.4" height="71" rx="6" fill="#121212" fill-opacity="0.9"/>
<rect x="1235.80" y="1285.80" width="18.30" height="18.00" fill="#2e8bfa"/>
<rect x="1235.80" y="1310.00" width="18.30" height="18.00" fill="#fca206"/>
<text x="1262.16" y="1303.80" font-size="19" fill="#f0f0f0" textLength="207.07" lengthAdjust="spacingAndGlyphs">Implied Policy Rate (%)</text>
<text x="1262.38" y="1327.30" font-size="19" fill="#f0f0f0" textLength="276.70" lengthAdjust="spacingAndGlyphs">Number of Hikes/Cuts Priced In</text>
<rect x="4.00" y="1423.60" width="2874.00" height="86.00" fill="#1b1b1b"/>
<rect x="358.00" y="1423.60" width="2.00" height="86.00" fill="#0a0a0a"/>
<rect x="1618.00" y="1423.60" width="3.00" height="86.00" fill="#0d0d0d"/>
<rect x="56.00" y="1455.50" width="10.00" height="3.00" fill="#f7a21b"/>
<rect x="184.00" y="1453.70" width="4.00" height="5.00" fill="#f7a21b"/>
<rect x="202.00" y="1455.50" width="12.00" height="3.00" fill="#f7a21b"/>
<rect x="274.00" y="1453.70" width="4.00" height="5.00" fill="#f7a21b"/>
<text x="391.36" y="1477.40" font-size="29" fill="#f2f2f2" font-weight="700" textLength="97.78" lengthAdjust="spacingAndGlyphs" stroke="#1b1b1b" stroke-width="0.2">ETWM</text>
<text x="511.44" y="1477.40" font-size="32" fill="#d6d6d6" textLength="433.68" lengthAdjust="spacingAndGlyphs" stroke="#1b1b1b" stroke-width="0.2">Assess worldwide interest rates</text>
<text x="1649.97" y="1477.40" font-size="29" fill="#f2f2f2" font-weight="700" textLength="89.23" lengthAdjust="spacingAndGlyphs" stroke="#1b1b1b" stroke-width="0.2">FWCV</text>
<text x="1760.58" y="1477.40" font-size="32" fill="#d6d6d6" textLength="557.81" lengthAdjust="spacingAndGlyphs" stroke="#1b1b1b" stroke-width="0.2">See how forward curves move over time</text>
<defs><linearGradient id="ov" x1="0" y1="0" x2="1" y2="0.3">
<stop offset="0" stop-color="#a9a28e"/><stop offset="0.5" stop-color="#9d9a88"/><stop offset="1" stop-color="#a7a594"/></linearGradient></defs>
<rect x="0" y="1457.5" width="519.6" height="80" rx="15" fill="#e4e0d4"/>
<rect x="0" y="1459" width="519.6" height="80" rx="15" fill="url(#ov)"/>
<rect x="204.3" y="1505.7" width="111" height="30" rx="10" fill="#b6b6bc"/>
</svg></body></html>
